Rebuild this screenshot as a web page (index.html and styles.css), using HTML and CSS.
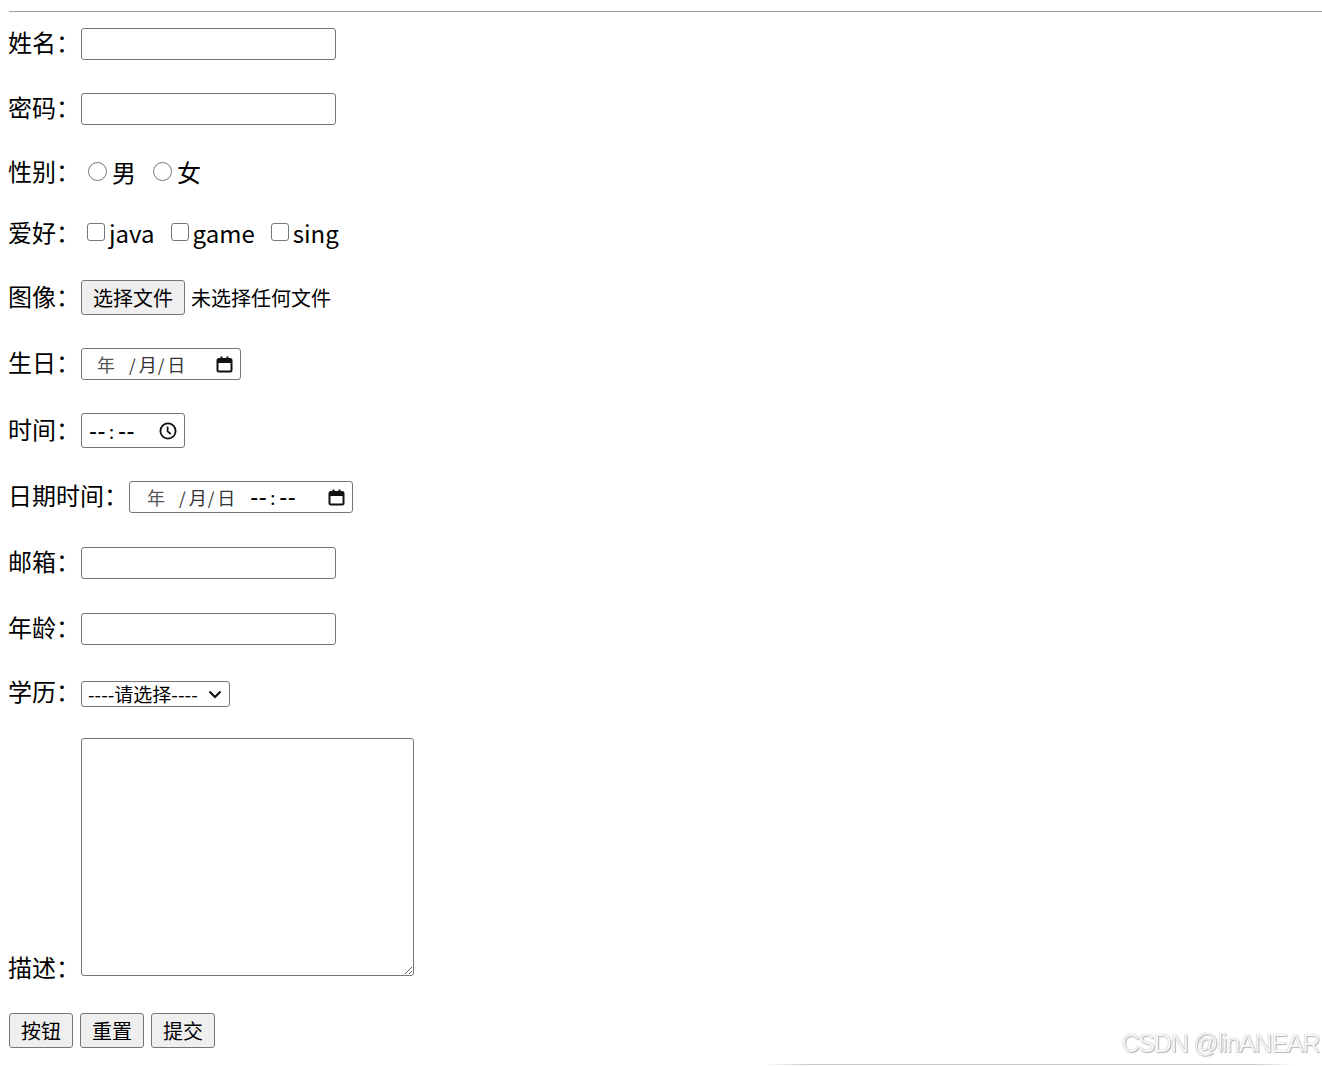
FILE: index.html
```
<!DOCTYPE html>
<html>
<head>
	<title>表单</title>
	<meta charset="utf-8">
	<link rel="stylesheet" href="styles.css">
</head>
<body>
	<hr class="rule">
	<form class="form">
		<div class="row">
			<span class="lbl">姓名：</span><input class="field" type="text">
		</div>
		<div class="row">
			<span class="lbl">密码：</span><input class="field" type="password">
		</div>
		<div class="row row-sm">
			<span class="lbl">性别：</span>
			<label class="opt"><input class="radio" type="radio" name="sex">男</label>
			<label class="opt"><input class="radio" type="radio" name="sex">女</label>
		</div>
		<div class="row row-sm">
			<span class="lbl">爱好：</span>
			<label class="opt"><input class="check" type="checkbox">java</label>
			<label class="opt"><input class="check" type="checkbox">game</label>
			<label class="opt"><input class="check" type="checkbox">sing</label>
		</div>
		<div class="row row-tall">
			<span class="lbl">图像：</span>
			<span class="btn file-btn">选择文件</span>
			<span class="file-name">未选择任何文件</span>
		</div>
		<div class="row">
			<span class="lbl">生日：</span>
			<div class="picker date">
				<span class="seg seg-y">年</span><span class="sl">/</span><span class="seg">月</span><span class="sl">/</span><span class="seg">日</span>
				<svg class="ico" width="17" height="17" viewBox="0 0 17 17">
					<rect x="1.5" y="3" width="14" height="12.5" rx="1.5" fill="none" stroke="#111" stroke-width="2"/>
					<rect x="1.5" y="3" width="14" height="4" fill="#111"/>
					<rect x="4.5" y="0.5" width="2" height="3" fill="#111"/>
					<rect x="10.5" y="0.5" width="2" height="3" fill="#111"/>
				</svg>
			</div>
		</div>
		<div class="row row-tall">
			<span class="lbl">时间：</span>
			<div class="picker time">
				<span class="dash">--</span><span class="colon">:</span><span class="dash">--</span>
				<svg class="ico" width="18" height="18" viewBox="0 0 18 18">
					<circle cx="9" cy="9" r="7.6" fill="none" stroke="#111" stroke-width="1.8"/>
					<path d="M8.6 4.6V9.4L11.8 12" fill="none" stroke="#111" stroke-width="1.7"/>
				</svg>
			</div>
		</div>
		<div class="row">
			<span class="lbl">日期时间：</span>
			<div class="picker datetime">
				<span class="seg seg-y">年</span><span class="sl">/</span><span class="seg">月</span><span class="sl">/</span><span class="seg">日</span>
				<span class="dash dash-first">--</span><span class="colon">:</span><span class="dash">--</span>
				<svg class="ico" width="17" height="17" viewBox="0 0 17 17">
					<rect x="1.5" y="3" width="14" height="12.5" rx="1.5" fill="none" stroke="#111" stroke-width="2"/>
					<rect x="1.5" y="3" width="14" height="4" fill="#111"/>
					<rect x="4.5" y="0.5" width="2" height="3" fill="#111"/>
					<rect x="10.5" y="0.5" width="2" height="3" fill="#111"/>
				</svg>
			</div>
		</div>
		<div class="row row-mail">
			<span class="lbl">邮箱：</span><input class="field" type="email">
		</div>
		<div class="row row-age">
			<span class="lbl">年龄：</span><input class="field" type="text">
		</div>
		<div class="row row-sel">
			<span class="lbl">学历：</span>
			<div class="sel">
				<span class="sel-text">----请选择----</span>
				<svg class="chev" width="14" height="9" viewBox="0 0 14 9">
					<path d="M1.5 1.5L7 7L12.5 1.5" fill="none" stroke="#111" stroke-width="2.2"/>
				</svg>
			</div>
		</div>
		<div class="row row-area">
			<span class="lbl lbl-area">描述：</span><textarea class="area"></textarea>
		</div>
		<div class="row row-btns">
			<button class="btn" type="button">按钮</button>
			<button class="btn" type="reset">重置</button>
			<button class="btn" type="submit">提交</button>
		</div>
	</form>
	<div class="mark">CSDN @linANEAR</div>
	<div class="mark-line"></div>
</body>
</html>
```

FILE: styles.css
```
body{
	margin: 0;
	font-family: "Noto Sans CJK SC", "Noto Sans", sans-serif;
	color: #000;
	background: #fff;
}
.rule{
	margin: 11px 0 0 9px;
	border: 0;
	border-top: 1px solid #a0a0a0;
	height: 0;
}
.form{
	display: flex;
	flex-direction: column;
	gap: 33px;
	margin-top: 16px;
	padding-left: 8px;
}
.row{
	display: flex;
	align-items: center;
	height: 32px;
}
.row-sm{
	height: 28px;
}
.row-tall{
	height: 35px;
}
.row-mail{
	margin-top: 1px;
}
.row-age{
	margin-top: 1px;
}
.row-sel{
	height: 29px;
}
.row-area{
	height: auto;
	align-items: flex-end;
	margin-top: -2px;
}
.row-btns{
	height: 35px;
	margin-top: 4px;
	padding-left: 1px;
	gap: 7px;
}
.lbl{
	font-size: 24px;
	line-height: 32px;
	margin-bottom: 4px;
	white-space: nowrap;
}
.row-sm .lbl{
	margin-bottom: 2px;
}
.lbl-area{
	line-height: 24px;
	margin-bottom: -3px;
}
.field{
	box-sizing: border-box;
	width: 255px;
	height: 32px;
	margin: 0 0 0 1px;
	border: 1px solid #767676;
	border-radius: 3px;
	background: #fff;
}
.opt{
	display: flex;
	align-items: center;
	font-size: 24px;
	line-height: 28px;
	margin-right: 9px;
}
.radio, .check{
	appearance: none;
	box-sizing: border-box;
	width: 19px;
	height: 19px;
	margin: 0 5px 0 8px;
	border: 1px solid #767676;
	background: #fff;
}
.radio{
	border-radius: 50%;
	margin-top: -2px;
}
.check{
	width: 18px;
	height: 18px;
	border-radius: 3px;
	margin: -3px 4px 0 7px;
}
.btn{
	box-sizing: border-box;
	display: flex;
	align-items: center;
	justify-content: center;
	height: 35px;
	width: 64px;
	padding: 0;
	border: 1px solid #767676;
	border-radius: 3px;
	background: #efefef;
	font-family: inherit;
	font-size: 20px;
	color: #000;
}
.file-btn{
	width: 104px;
	margin-left: 1px;
}
.file-name{
	font-size: 20px;
	margin-left: 6px;
}
.picker{
	box-sizing: border-box;
	display: flex;
	align-items: center;
	height: 32px;
	margin-left: 1px;
	padding: 0 7px 0 15px;
	border: 1px solid #767676;
	border-radius: 3px;
	font-size: 18px;
	color: #333;
}
.date{
	width: 160px;
}
.datetime{
	width: 224px;
	padding-left: 17px;
}
.time{
	width: 104px;
	height: 35px;
	padding-left: 7px;
	color: #000;
}
.seg-y{
	margin-right: 13px;
	color: #555;
}
.sl{
	margin: 0 3px 0 1px;
	font-size: 17px;
}
.dash{
	font-family: "Liberation Sans", Arial, sans-serif;
	font-size: 24px;
	letter-spacing: 0.5px;
	color: #000;
}
.dash-first{
	margin-left: 15px;
}
.colon{
	margin: 0 4px 0 3px;
	font-size: 18px;
	color: #000;
}
.ico{
	margin-left: auto;
	flex: none;
}
.sel{
	box-sizing: border-box;
	display: flex;
	align-items: center;
	align-self: flex-end;
	width: 149px;
	height: 26px;
	margin-left: 1px;
	padding: 0 7px 0 6px;
	border: 1px solid #767676;
	border-radius: 3px;
	background: #fff;
	font-size: 19px;
	line-height: 24px;
}
.chev{
	margin-left: auto;
}
.area{
	box-sizing: border-box;
	width: 333px;
	height: 238px;
	margin: 0 0 0 1px;
	border: 1px solid #767676;
	border-radius: 3px;
	resize: both;
}
.mark{
	position: fixed;
	right: 3px;
	bottom: 8px;
	font-family: "Liberation Sans", Arial, sans-serif;
	font-size: 25px;
	letter-spacing: -1.2px;
	line-height: 30px;
	color: #f6f6f6;
	text-shadow: 0 0 1px #999, 1px 1px 1px #bbb;
}
.mark-line{
	position: fixed;
	left: 765px;
	bottom: 1px;
	width: 530px;
	height: 1px;
	background: linear-gradient(to right, rgba(200,200,200,0), #c8c8c8 8%, #c8c8c8 92%, rgba(200,200,200,0));
	box-shadow: 0 -8px 12px rgba(0,0,0,0.025);
}
```
